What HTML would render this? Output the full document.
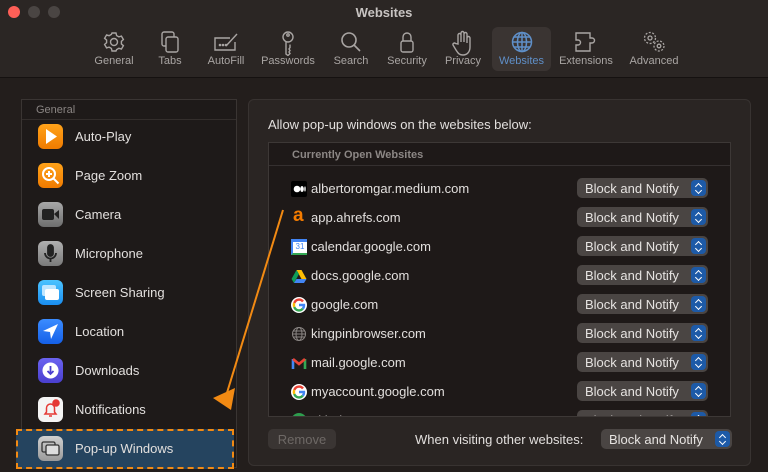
<!DOCTYPE html><html><head><style>
*{margin:0;padding:0;box-sizing:border-box}
body{width:768px;height:472px;background:#231e1c;font-family:"Liberation Sans",sans-serif;color:#ddd;position:relative;overflow:hidden}
.top{position:absolute;left:0;top:0;width:768px;height:78px;background:#2b2624;border-bottom:1px solid #151110}
.dot{position:absolute;top:6px;width:12px;height:12px;border-radius:50%}
.title{position:absolute;top:5px;width:768px;text-align:center;font-size:13px;font-weight:bold;color:#c8c4c2}
.tb{position:absolute;top:27px;height:44px;text-align:center;font-size:11px;color:#a9a5a3}
.tb svg{position:absolute;left:50%;top:3px;transform:translateX(-50%)}
.tb span{position:absolute;left:0;right:0;top:28px;white-space:nowrap}
.side{position:absolute;left:21px;top:99px;width:216px;height:369px;background:#1e1a19;border:1px solid #3a3533}
.gh{position:absolute;left:14px;top:4px;font-size:11px;color:#8a8583}
.ghl{position:absolute;left:0;right:0;top:19px;border-top:1px solid #332e2c}
.it{position:absolute;left:0;width:214px;height:39px}
.ic{position:absolute;left:16px;top:7px;width:25px;height:25px;border-radius:6px}
.it span{position:absolute;left:53px;top:12px;font-size:13px;color:#e2dfdd}
.panel{position:absolute;left:248px;top:99px;width:503px;height:367px;background:#2a2523;border:1px solid #383331;border-radius:6px}
.lab{position:absolute;left:268px;top:117px;font-size:13px;color:#e2dfdd}
.tbl{position:absolute;left:268px;top:142px;width:463px;height:275px;background:#1e1918;border:1px solid #3d3836;overflow:hidden}
.th{position:absolute;left:23px;top:6px;font-size:11px;font-weight:bold;color:#8c8785}
.thl{position:absolute;left:0;right:0;top:22px;border-top:1px solid #353030}
.row{position:absolute;left:0;width:463px;height:29px}
.fi{position:absolute;left:22px;top:7px;width:16px;height:16px}
.row .t{position:absolute;left:42px;top:7px;font-size:13px;color:#e2dfdd}
.pop{position:absolute;width:131px;height:20px;background:#4a4543;border-radius:5px;font-size:13px;color:#e6e3e1;padding:3px 0 0 8px}
.pop i{position:absolute;right:2px;top:2px;width:15px;height:16px;background:#1d5aa7;border-radius:4px}
.pop i:before{content:"";position:absolute;left:5px;top:4px;width:4px;height:4px;border-left:1.5px solid #fff;border-top:1.5px solid #fff;transform:rotate(45deg)}
.pop i:after{content:"";position:absolute;left:5px;top:8px;width:4px;height:4px;border-right:1.5px solid #fff;border-bottom:1.5px solid #fff;transform:rotate(45deg)}
.row .pop{left:308px;top:4px}
</style></head><body>
<div class="top">
<div class="dot" style="left:8px;background:#fe5f57"></div>
<div class="dot" style="left:28px;background:#4a4543"></div>
<div class="dot" style="left:48px;background:#4a4543"></div>
<div class="title">Websites</div>
<div style="position:absolute;left:492px;top:27px;width:59px;height:44px;background:#3a3432;border-radius:6px"></div>
<div class="tb" style="left:90px;width:48px"><svg width="24" height="24" viewBox="0 0 24 24" fill="none" stroke="#a9a5a3" stroke-width="1.4"><circle cx="12" cy="12" r="3.5"/><path d="M10 3h4l.6 2.6 2.3 1.3 2.5-.8 2 3.4-2 1.8v2.6l2 1.8-2 3.4-2.5-.8-2.3 1.3L14 21h-4l-.6-2.6-2.3-1.3-2.5.8-2-3.4 2-1.8v-2.6l-2-1.8 2-3.4 2.5.8 2.3-1.3z"/></svg><span>General</span></div>
<div class="tb" style="left:150px;width:40px"><svg width="24" height="24" viewBox="0 0 24 24" fill="none" stroke="#a9a5a3" stroke-width="1.4"><rect x="4" y="2" width="12" height="14" rx="2"/><rect x="8" y="7" width="12" height="15" rx="2" fill="#2b2624"/></svg><span>Tabs</span></div>
<div class="tb" style="left:202px;width:48px"><svg width="28" height="24" viewBox="0 0 28 24" fill="none" stroke="#a9a5a3" stroke-width="1.4"><path d="M18 8H3v12h20v-8"/><path d="M14 16l11-12"/><circle cx="8" cy="15" r=".6" fill="#a9a5a3"/><circle cx="11" cy="15" r=".6" fill="#a9a5a3"/><circle cx="14" cy="15" r=".6" fill="#a9a5a3"/></svg><span>AutoFill</span></div>
<div class="tb" style="left:258px;width:60px"><svg width="24" height="26" viewBox="0 0 24 26" fill="none" stroke="#a9a5a3" stroke-width="1.4"><circle cx="12" cy="7" r="5"/><circle cx="12" cy="5" r="1.2"/><path d="M10 12v12l2 1.5 2-2-1-1.5 1-1.5-1-1.5 1-1.5v-3"/></svg><span>Passwords</span></div>
<div class="tb" style="left:328px;width:46px"><svg width="24" height="24" viewBox="0 0 24 24" fill="none" stroke="#a9a5a3" stroke-width="1.6"><circle cx="10" cy="10" r="7"/><path d="M15 15l6 6"/></svg><span>Search</span></div>
<div class="tb" style="left:382px;width:50px"><svg width="24" height="24" viewBox="0 0 24 24" fill="none" stroke="#a9a5a3" stroke-width="1.4"><path d="M8 11V7a4 4 0 018 0v4"/><rect x="6" y="11" width="12" height="11" rx="2"/></svg><span>Security</span></div>
<div class="tb" style="left:440px;width:46px"><svg width="24" height="26" viewBox="0 0 24 26" fill="none" stroke="#a9a5a3" stroke-width="1.4"><path d="M7 14V5a1.5 1.5 0 013 0v7V3a1.5 1.5 0 013 0v9V4a1.5 1.5 0 013 0v9-5a1.5 1.5 0 013 0v9c0 5-3 8-7 8s-5-2-7-5l-3-5a1.5 1.5 0 012.5-1.5z"/></svg><span>Privacy</span></div>
<div class="tb" style="left:494px;width:55px;color:#5f8fc8"><svg width="24" height="24" viewBox="0 0 24 24" fill="none" stroke="#5f8fc8" stroke-width="1.5"><circle cx="12" cy="12" r="9.5"/><ellipse cx="12" cy="12" rx="4.5" ry="9.5"/><path d="M12 2.5v19M2.5 12h19M4 7h16M4 17h16"/></svg><span>Websites</span></div>
<div class="tb" style="left:556px;width:60px"><svg width="26" height="24" viewBox="0 0 26 24" fill="none" stroke="#a9a5a3" stroke-width="1.4"><path d="M3 3h14v5h2a2.5 2.5 0 010 5h-2v8H3v-6h2a2.5 2.5 0 000-5H3z"/></svg><span>Extensions</span></div>
<div class="tb" style="left:624px;width:60px"><svg width="28" height="24" viewBox="0 0 28 24" fill="none" stroke="#a9a5a3" stroke-width="1.3"><circle cx="10" cy="8" r="5.5" stroke-dasharray="2 1.5"/><circle cx="10" cy="8" r="2"/><circle cx="19" cy="16" r="5" stroke-dasharray="2 1.5"/><circle cx="19" cy="16" r="1.8"/></svg><span>Advanced</span></div>
</div>

<div class="side">
<div class="gh">General</div><div class="ghl"></div>
<div class="it" style="top:17px"><div class="ic" style="background:linear-gradient(#ffa31a,#f07b00)"><svg width="25" height="25"><path d="M8 5l11 7.5L8 20z" fill="#fff"/></svg></div><span>Auto-Play</span></div>
<div class="it" style="top:56px"><div class="ic" style="background:linear-gradient(#ffa31a,#f07b00)"><svg width="25" height="25" fill="none" stroke="#fff" stroke-width="2"><circle cx="11" cy="11" r="6"/><path d="M15.5 15.5l5 5M11 8v6M8 11h6"/></svg></div><span>Page Zoom</span></div>
<div class="it" style="top:95px"><div class="ic" style="background:linear-gradient(#a8a8a8,#6e6e6e)"><svg width="25" height="25"><rect x="4" y="7" width="12" height="11" rx="2" fill="#222"/><path d="M16 12l5-4v9z" fill="#222"/></svg></div><span>Camera</span></div>
<div class="it" style="top:134px"><div class="ic" style="background:linear-gradient(#b0b0b0,#7a7a7a)"><svg width="25" height="25" fill="none" stroke="#222" stroke-width="1.8"><rect x="10" y="4" width="5" height="11" rx="2.5" fill="#222"/><path d="M7 12a5.5 5.5 0 0011 0M12.5 17.5V21"/></svg></div><span>Microphone</span></div>
<div class="it" style="top:173px"><div class="ic" style="background:linear-gradient(#4cc3ff,#1a8ef0)"><svg width="25" height="25"><rect x="4" y="5" width="14" height="11" rx="2" fill="#bfe6ff"/><rect x="7" y="9" width="14" height="11" rx="2" fill="#fff"/></svg></div><span>Screen Sharing</span></div>
<div class="it" style="top:212px"><div class="ic" style="background:linear-gradient(#3b8cff,#1560e8)"><svg width="25" height="25"><path d="M20 5L5 12l7 1 1 7z" fill="#fff"/></svg></div><span>Location</span></div>
<div class="it" style="top:251px"><div class="ic" style="background:linear-gradient(#6b63f0,#4a3fcf)"><svg width="25" height="25"><circle cx="12.5" cy="12.5" r="8" fill="#fff"/><path d="M12.5 8v8M9.5 13l3 3 3-3" stroke="#4a3fcf" stroke-width="1.8" fill="none"/></svg></div><span>Downloads</span></div>
<div class="it" style="top:290px"><div class="ic" style="background:#f4f4f4"><svg width="25" height="25" fill="none" stroke="#e53935" stroke-width="1.5"><path d="M7 17h11l-1.5-2v-4a4 4 0 00-8 0v4z"/><path d="M11 19h3"/><circle cx="18" cy="6" r="3" fill="#e53935"/></svg></div><span>Notifications</span></div>
<div class="it" style="top:329px;left:-6px;width:218px;height:40px;background:#25445f;border:2px dashed #f28a13"></div>
<div class="it" style="top:329px"><div class="ic" style="background:linear-gradient(#d0d0d0,#9a9a9a)"><svg width="25" height="25" fill="none" stroke="#333" stroke-width="1.3"><rect x="4" y="6" width="13" height="10" rx="1.5"/><rect x="8" y="9" width="13" height="10" rx="1.5" fill="#ddd"/></svg></div><span>Pop-up Windows</span></div>
</div>

<div class="panel"></div>
<div class="lab">Allow pop-up windows on the websites below:</div>
<div class="tbl">
<div class="th">Currently Open Websites</div><div class="thl"></div>
<div class="row" style="top:31px"><div class="fi" style="background:#000;border-radius:2px"><svg width="16" height="16"><circle cx="6" cy="8" r="3.3" fill="#fff"/><ellipse cx="11" cy="8" rx="1.8" ry="3" fill="#fff"/><ellipse cx="14" cy="8" rx=".7" ry="2.6" fill="#fff"/></svg></div><span class="t">albertoromgar.medium.com</span><div class="pop">Block and Notify<i></i></div></div>
<div class="row" style="top:60px"><div class="fi"><span style="position:absolute;left:2px;top:-5px;font-size:19px;font-weight:bold;color:#f57c00">a</span></div><span class="t">app.ahrefs.com</span><div class="pop">Block and Notify<i></i></div></div>
<div class="row" style="top:89px"><div class="fi" style="background:#fff;border-top:3px solid #4285f4;border-left:2px solid #4285f4;border-bottom:2px solid #34a853;font-size:8px;color:#4285f4;text-align:center;line-height:10px">31</div><span class="t">calendar.google.com</span><div class="pop">Block and Notify<i></i></div></div>
<div class="row" style="top:118px"><div class="fi"><svg width="16" height="16"><path d="M5.5 2h5l5 9h-5z" fill="#fbbc04"/><path d="M5.5 2L.5 11l2.5 4 5-9z" fill="#0f9d58"/><path d="M3 15h10l2.5-4h-10z" fill="#4285f4"/></svg></div><span class="t">docs.google.com</span><div class="pop">Block and Notify<i></i></div></div>
<div class="row" style="top:147px"><div class="fi" style="background:#fff;border-radius:50%"><svg width="16" height="16" fill="none" stroke-width="2.4"><path d="M12 4.5A5 5 0 003.3 6" stroke="#ea4335"/><path d="M3.3 6a5 5 0 000 4" stroke="#fbbc05"/><path d="M3.3 10a5 5 0 008.5 1.7" stroke="#34a853"/><path d="M11.8 11.7A5 5 0 0013 8H8" stroke="#4285f4"/></svg></div><span class="t">google.com</span><div class="pop">Block and Notify<i></i></div></div>
<div class="row" style="top:176px"><div class="fi"><svg width="16" height="16" fill="none" stroke="#8a8583" stroke-width="1"><circle cx="8" cy="8" r="6.5"/><ellipse cx="8" cy="8" rx="3" ry="6.5"/><path d="M1.5 8h13M2.5 5h11M2.5 11h11"/></svg></div><span class="t">kingpinbrowser.com</span><div class="pop">Block and Notify<i></i></div></div>
<div class="row" style="top:205px"><div class="fi"><svg width="16" height="16" fill="none" stroke-width="2.6"><path d="M2 14V4" stroke="#4285f4"/><path d="M14 14V4" stroke="#34a853"/><path d="M2 4l6 5 6-5" stroke="#ea4335"/></svg></div><span class="t">mail.google.com</span><div class="pop">Block and Notify<i></i></div></div>
<div class="row" style="top:234px"><div class="fi" style="background:#fff;border-radius:50%"><svg width="16" height="16" fill="none" stroke-width="2.4"><path d="M12 4.5A5 5 0 003.3 6" stroke="#ea4335"/><path d="M3.3 6a5 5 0 000 4" stroke="#fbbc05"/><path d="M3.3 10a5 5 0 008.5 1.7" stroke="#34a853"/><path d="M11.8 11.7A5 5 0 0013 8H8" stroke="#4285f4"/></svg></div><span class="t">myaccount.google.com</span><div class="pop">Block and Notify<i></i></div></div>
<div class="row" style="top:263px"><div class="fi" style="background:#2e9d4e;border-radius:50%"></div><span class="t">github.com</span><div class="pop">Block and Notify<i></i></div></div>
</div>
<div style="position:absolute;left:268px;top:429px;width:68px;height:20px;background:#3a3533;border-radius:5px;font-size:13px;color:#6e6966;text-align:center;padding-top:3px">Remove</div>
<div style="position:absolute;left:415px;top:432px;font-size:13px;color:#e2dfdd">When visiting other websites:</div>
<div class="pop" style="left:601px;top:429px">Block and Notify<i></i></div>

<svg style="position:absolute;left:0;top:0" width="768" height="472"><path d="M283 210L226 396" stroke="#f28a13" stroke-width="2" fill="none"/><path d="M213 398l18 12 4-22z" fill="#f28a13"/></svg>
</body></html>
